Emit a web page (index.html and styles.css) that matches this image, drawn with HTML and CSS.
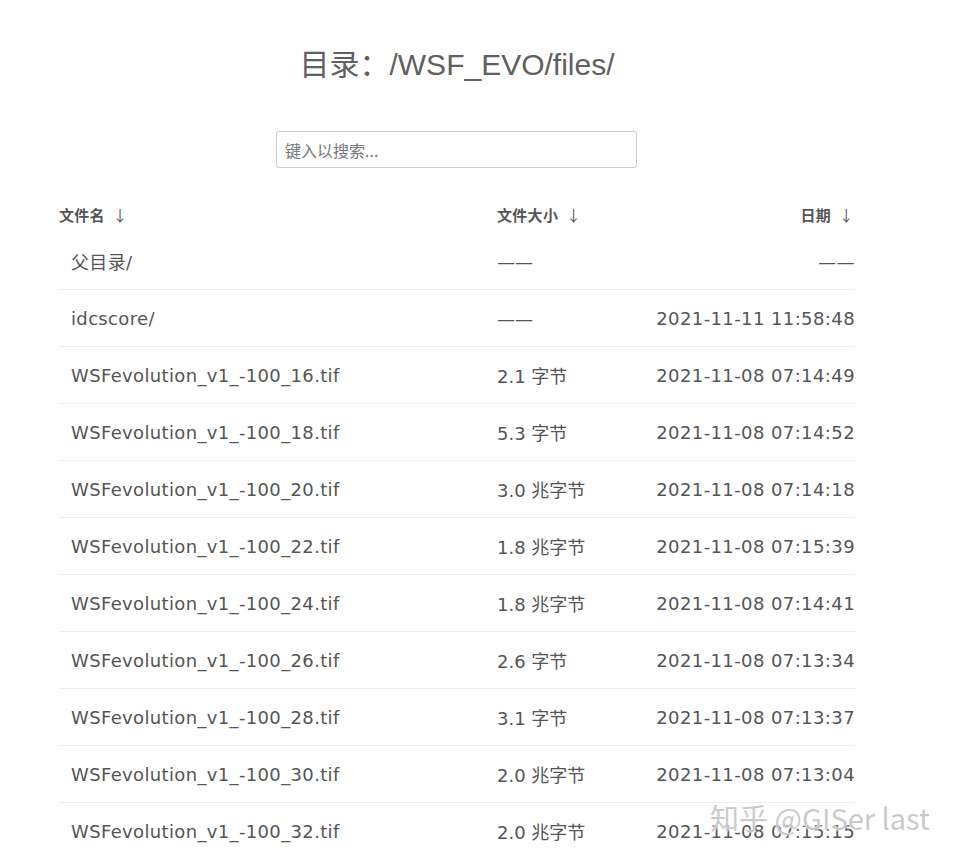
FILE: index.html
```html
<!DOCTYPE html>
<html lang="zh">
<head>
<meta charset="utf-8">
<title>目录</title>
<link rel="stylesheet" href="styles.css">
</head>
<body>
<div class="page">
  <h1 class="title">目录：/WSF_EVO/files/</h1>
  <div class="search-wrap"><input class="search" type="text" placeholder="键入以搜索..."></div>
  <div class="listing">
    <div class="row head">
      <div class="c-name">文件名 <span class="arrow">↓</span></div>
      <div class="c-size">文件大小 <span class="arrow">↓</span></div>
      <div class="c-date">日期 <span class="arrow">↓</span></div>
    </div>
    <div class="row"><div class="c-name">父目录/</div><div class="c-size">——</div><div class="c-date">——</div></div>
    <div class="row"><div class="c-name">idcscore/</div><div class="c-size">——</div><div class="c-date">2021-11-11 11:58:48</div></div>
    <div class="row"><div class="c-name">WSFevolution_v1_-100_16.tif</div><div class="c-size">2.1 字节</div><div class="c-date">2021-11-08 07:14:49</div></div>
    <div class="row"><div class="c-name">WSFevolution_v1_-100_18.tif</div><div class="c-size">5.3 字节</div><div class="c-date">2021-11-08 07:14:52</div></div>
    <div class="row"><div class="c-name">WSFevolution_v1_-100_20.tif</div><div class="c-size">3.0 兆字节</div><div class="c-date">2021-11-08 07:14:18</div></div>
    <div class="row"><div class="c-name">WSFevolution_v1_-100_22.tif</div><div class="c-size">1.8 兆字节</div><div class="c-date">2021-11-08 07:15:39</div></div>
    <div class="row"><div class="c-name">WSFevolution_v1_-100_24.tif</div><div class="c-size">1.8 兆字节</div><div class="c-date">2021-11-08 07:14:41</div></div>
    <div class="row"><div class="c-name">WSFevolution_v1_-100_26.tif</div><div class="c-size">2.6 字节</div><div class="c-date">2021-11-08 07:13:34</div></div>
    <div class="row"><div class="c-name">WSFevolution_v1_-100_28.tif</div><div class="c-size">3.1 字节</div><div class="c-date">2021-11-08 07:13:37</div></div>
    <div class="row"><div class="c-name">WSFevolution_v1_-100_30.tif</div><div class="c-size">2.0 兆字节</div><div class="c-date">2021-11-08 07:13:04</div></div>
    <div class="row"><div class="c-name">WSFevolution_v1_-100_32.tif</div><div class="c-size">2.0 兆字节</div><div class="c-date">2021-11-08 07:15:15</div></div>
  </div>
</div>
<div class="watermark">知乎 @GISer last</div>
</body>
</html>
```
FILE: styles.css
```css
html, body {
  margin: 0;
  padding: 0;
  background: #fff;
}
body {
  font-family: "DejaVu Sans", "Noto Sans CJK SC", sans-serif;
  color: #555;
  overflow: hidden;
  height: 857px;
  position: relative;
}
.page {
  width: 796px;
  margin-left: 59px;
  padding-top: 44px;
}
.title {
  margin: 0;
  text-align: center;
  font-weight: normal;
  font-family: "Liberation Sans", "Noto Sans CJK SC", sans-serif;
  font-size: 30px;
  line-height: 42px;
  color: #606060;
}
.search-wrap {
  display: flex;
  justify-content: center;
  margin-top: 45px;
}
.search {
  width: 361px;
  height: 37px;
  box-sizing: border-box;
  border: 1px solid #ccc;
  border-radius: 3px;
  padding: 0 8px;
  font-family: "Noto Sans CJK SC", sans-serif;
  font-size: 16px;
  color: #555;
  outline: none;
  margin-right: 1px;
}
.search::placeholder {
  color: #777;
}
.listing {
  margin-top: 27px;
}
.row {
  display: grid;
  grid-template-columns: 438px 1fr auto;
  align-items: center;
  height: 57px;
  border-bottom: 1px solid #eee;
  box-sizing: border-box;
  font-size: 18px;
}
.row .c-name {
  padding-left: 12px;
  letter-spacing: 0.35px;
}
.row.head {
  height: 38px;
  border-bottom: none;
  font-weight: bold;
  font-size: 15px;
  letter-spacing: 0.3px;
  font-family: "Noto Sans CJK SC", sans-serif;
}
.row.head .c-name {
  padding-left: 0;
  letter-spacing: 0.3px;
}
.row.head .c-date {
  padding-right: 1px;
  letter-spacing: 0.3px;
}
.arrow {
  font-weight: normal;
  margin-left: 4px;
}
.c-date {
  text-align: right;
  letter-spacing: 0.4px;
}
.watermark {
  position: absolute;
  left: 710px;
  top: 796px;
  font-family: "Noto Sans CJK SC", sans-serif;
  font-size: 29px;
  color: rgba(150, 150, 150, 0.5);
  text-shadow: 0 0 2px #fff, 0 0 2px #fff;
  white-space: nowrap;
}
```
